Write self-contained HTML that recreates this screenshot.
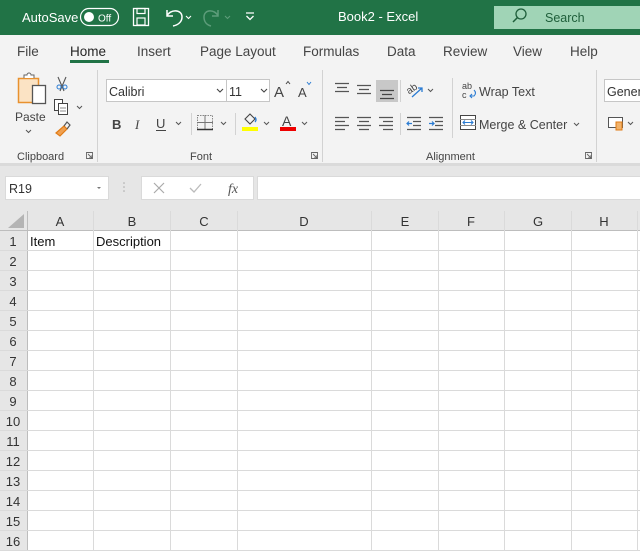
<!DOCTYPE html>
<html><head><meta charset="utf-8">
<style>
html,body{margin:0;padding:0;background:#fff;width:640px;height:551px;overflow:hidden}
svg{display:block;font-family:"Liberation Sans",sans-serif}
</style></head><body>
<svg width="640" height="551" viewBox="0 0 640 551" xmlns="http://www.w3.org/2000/svg">
<!-- title bar -->
<rect x="0" y="0" width="640" height="35" fill="#217346"/>
<text x="22" y="22" font-size="13" fill="#fff">AutoSave</text>
<rect x="80.5" y="8.5" width="38" height="17" rx="8.5" fill="none" stroke="#fff" stroke-width="1.2"/>
<circle cx="89" cy="17" r="5" fill="#fff"/>
<text x="98" y="21.5" font-size="10" fill="#fff">Off</text>
<!-- save icon -->
<rect x="133.5" y="8.5" width="15" height="17" fill="none" stroke="#fff" stroke-width="1.3"/>
<rect x="137" y="8.5" width="8" height="5" fill="none" stroke="#fff" stroke-width="1.2"/>
<rect x="137" y="18" width="8" height="7" fill="none" stroke="#fff" stroke-width="1.2"/>
<!-- undo -->
<path d="M167 10 v6 h6 M167 16 C170 9 182 9 182 17 C182 22 178 25 173 26" fill="none" stroke="#fff" stroke-width="1.5"/>
<path d="M186 16 l2.5 2.5 l2.5-2.5" fill="none" stroke="#fff" stroke-width="1.1"/>
<!-- redo (disabled) -->
<path d="M218 10 v6 h-6 M218 16 C215 9 204 9 204 17 C204 22 207 25 211 26" fill="none" stroke="#5d9c7a" stroke-width="1.5"/>
<path d="M225 16 l2.5 2.5 l2.5-2.5" fill="none" stroke="#5d9c7a" stroke-width="1.1"/>
<!-- customize -->
<path d="M246 13 h8 M246.5 16 l3.5 3.5 l3.5-3.5" fill="none" stroke="#fff" stroke-width="1.3"/>
<text x="338" y="21" font-size="13" fill="#fff">Book2  -  Excel</text>
<rect x="494" y="6" width="146" height="23" fill="#a0d4b6"/>
<circle cx="521" cy="14" r="5" fill="none" stroke="#1e5e3a" stroke-width="1.3"/>
<path d="M517.5 17.5 l-4.5 4.5" stroke="#1e5e3a" stroke-width="1.5"/>
<text x="545" y="22" font-size="12.5" fill="#1e5e3a">Search</text>

<!-- ribbon bg -->
<rect x="0" y="35" width="640" height="128" fill="#f3f3f3"/>
<g font-size="13.5" fill="#444">
<text x="17" y="56">File</text>
<text x="70" y="56" fill="#262626">Home</text>
<text x="137" y="56">Insert</text>
<text x="200" y="56">Page Layout</text>
<text x="303" y="56">Formulas</text>
<text x="387" y="56">Data</text>
<text x="443" y="56">Review</text>
<text x="513" y="56">View</text>
<text x="570" y="56">Help</text>
</g>
<rect x="70" y="60" width="39" height="3" fill="#217346"/>

<!-- group separators -->
<g stroke="#d2d2d2"><line x1="97.5" y1="70" x2="97.5" y2="162"/><line x1="322.5" y1="70" x2="322.5" y2="162"/><line x1="596.5" y1="70" x2="596.5" y2="162"/>
<line x1="191.5" y1="113" x2="191.5" y2="135"/><line x1="235.5" y1="113" x2="235.5" y2="135"/><line x1="400.5" y1="113" x2="400.5" y2="135"/><line x1="452.5" y1="78" x2="452.5" y2="138"/><line x1="400.5" y1="80" x2="400.5" y2="102"/></g>

<!-- clipboard -->
<rect x="18.5" y="78.5" width="20" height="24" fill="#fbe3c4" stroke="#e8912e" stroke-width="1.5"/>
<path d="M24 78 v-3 h3 a2 2 0 0 1 4 0 h3 v3" fill="#fff" stroke="#666" stroke-width="1"/>
<rect x="32.5" y="85.5" width="13" height="18" fill="#fff" stroke="#555" stroke-width="1.3"/>
<text x="15" y="121" font-size="12" fill="#444">Paste</text>
<path d="M26 130 l2.5 2.5 l2.5-2.5" fill="none" stroke="#555"/>
<!-- scissors -->
<path d="M58 77 l6 14 M66 77 l-6 14" stroke="#555" stroke-width="1.1"/>
<circle cx="59" cy="87" r="2" fill="none" stroke="#2b7cd3"/><circle cx="65" cy="87" r="2" fill="none" stroke="#2b7cd3"/>
<!-- copy -->
<rect x="54.5" y="99.5" width="8" height="11" fill="#fff" stroke="#444"/>
<rect x="58.5" y="103.5" width="9" height="11" fill="#fff" stroke="#444"/>
<path d="M60 108 h6 M60 111 h6" stroke="#666" stroke-width=".8"/>
<path d="M77 106 l2.5 2.5 l2.5-2.5" fill="none" stroke="#555"/>
<!-- format painter -->
<path d="M56 133 l8-7 l3 3 l-7 7 z" fill="#f0a050" stroke="#e07b15" stroke-width="1.2"/>
<path d="M64 126 l3-4 l3 3 l-3 4" fill="none" stroke="#555" stroke-width="1.2"/>
<text x="17" y="160" font-size="11" fill="#444">Clipboard</text>
<path d="M86.5 152.5 h6 v6 h-6 z M88 154 l4 4 M92 155 v3 h-3" fill="none" stroke="#666" stroke-width=".9"/>

<!-- font -->
<rect x="106.5" y="79.5" width="120" height="22" fill="#fff" stroke="#c6c6c6"/>
<text x="109" y="96" font-size="12.5" fill="#333">Calibri</text>
<path d="M217 89 l3 3 l3-3" fill="none" stroke="#444" stroke-width="1.1"/>
<rect x="226.5" y="79.5" width="43" height="22" fill="#fff" stroke="#c6c6c6"/>
<text x="229" y="96" font-size="12.5" fill="#333">11</text>
<path d="M261 89 l3 3 l3-3" fill="none" stroke="#444" stroke-width="1.1"/>
<text x="274" y="97" font-size="15" fill="#444">A</text>
<path d="M286 84 l2-2.5 l2 2.5" fill="none" stroke="#444"/>
<text x="298" y="97" font-size="13" fill="#444">A</text>
<path d="M307 82 l2 2.5 l2-2.5" fill="none" stroke="#2b7cd3"/>
<text x="112" y="129" font-size="13" font-weight="bold" fill="#444">B</text>
<text x="135" y="129" font-size="13" font-style="italic" fill="#444" font-family="Liberation Serif">I</text>
<text x="156" y="128" font-size="13" fill="#444">U</text>
<line x1="156" y1="130.5" x2="166" y2="130.5" stroke="#444"/>
<path d="M176 122 l2.5 2.5 l2.5-2.5" fill="none" stroke="#555"/>
<rect x="197.5" y="115.5" width="15" height="14" fill="none" stroke="#888" stroke-dasharray="1.5 1"/>
<path d="M205 115 v15 M197 122.5 h16" stroke="#777"/>
<line x1="197" y1="129.5" x2="213" y2="129.5" stroke="#333" stroke-width="1.5"/>
<path d="M221 122 l2.5 2.5 l2.5-2.5" fill="none" stroke="#555"/>
<path d="M245 119 l5-5 l5 5 l-5 5 z" fill="none" stroke="#444" stroke-width="1.1"/>
<path d="M255 117 q2 3 0 5" fill="none" stroke="#2b7cd3" stroke-width="1.3"/>
<rect x="242" y="127" width="16" height="4" fill="#ffff00"/>
<path d="M264 122 l2.5 2.5 l2.5-2.5" fill="none" stroke="#555"/>
<text x="282" y="126" font-size="14" fill="#444">A</text>
<rect x="280" y="127" width="16" height="4" fill="#e00"/>
<path d="M302 122 l2.5 2.5 l2.5-2.5" fill="none" stroke="#555"/>
<text x="190" y="160" font-size="11" fill="#444">Font</text>
<path d="M311.5 152.5 h6 v6 h-6 z M313 154 l4 4 M317 155 v3 h-3" fill="none" stroke="#666" stroke-width=".9"/>

<!-- alignment -->
<g stroke="#555" stroke-width="1.2">
<path d="M335 84.5 h14 M337 88.5 h10 M335 92.5 h14" transform="translate(0,-1)"/>
<path d="M357 85.5 h14 M359 89.5 h10 M357 93.5 h14"/>
</g>
<rect x="376" y="80" width="22" height="22" fill="#c8c8c8"/>
<g stroke="#444" stroke-width="1.2"><path d="M380 90.5 h14 M382 94.5 h10 M380 98.5 h14"/></g>
<text x="407" y="92" font-size="10" fill="#444" transform="rotate(-35 412 90)">ab</text>
<path d="M412 97 l10-9 M418 88 h4 v4" fill="none" stroke="#2b7cd3" stroke-width="1.3"/>
<path d="M428 89 l2.5 2.5 l2.5-2.5" fill="none" stroke="#555"/>
<g stroke="#555" stroke-width="1.2">
<path d="M335 117.5 h14 M335 121.5 h10 M335 125.5 h14 M335 129.5 h10"/>
<path d="M357 117.5 h14 M359 121.5 h10 M357 125.5 h14 M359 129.5 h10"/>
<path d="M379 117.5 h14 M383 121.5 h10 M379 125.5 h14 M383 129.5 h10"/>
<path d="M407 117.5 h14 M413 121.5 h8 M413 125.5 h8 M407 129.5 h14"/>
<path d="M429 117.5 h14 M435 121.5 h8 M435 125.5 h8 M429 129.5 h14"/>
</g>
<path d="M412 123.5 h-5 m2-2 l-2 2 l2 2" fill="none" stroke="#2b7cd3" stroke-width="1.2"/>
<path d="M429 123.5 h5 m-2-2 l2 2 l-2 2" fill="none" stroke="#2b7cd3" stroke-width="1.2"/>
<text x="462" y="89" font-size="9" fill="#444">ab</text>
<text x="462" y="98" font-size="9" fill="#444">c</text>
<path d="M474 90 q3 3 0 6 h-4 m2-2 l-2 2 l2 2" fill="none" stroke="#2b7cd3" stroke-width="1.1"/>
<text x="479" y="96" font-size="12.5" fill="#444">Wrap Text</text>
<rect x="460.5" y="115.5" width="15" height="14" fill="#fff" stroke="#444"/>
<path d="M460 119.5 h16 M460 125.5 h16" stroke="#888"/>
<path d="M463 122.5 h10 m-2-2 l2 2 l-2 2 m-6-4 l-2 2 l2 2" fill="none" stroke="#2b7cd3" stroke-width="1.1"/>
<text x="479" y="129" font-size="12.5" fill="#444">Merge &amp; Center</text>
<path d="M574 123 l2.5 2.5 l2.5-2.5" fill="none" stroke="#555"/>
<text x="426" y="160" font-size="11" fill="#444">Alignment</text>
<path d="M585.5 152.5 h6 v6 h-6 z M587 154 l4 4 M591 155 v3 h-3" fill="none" stroke="#666" stroke-width=".9"/>

<!-- number -->
<rect x="604.5" y="79.5" width="40" height="22" fill="#fff" stroke="#c6c6c6"/>
<text x="607" y="96" font-size="12.5" fill="#333">Gener</text>
<rect x="608.5" y="117.5" width="14" height="10" fill="#fff" stroke="#555"/>
<rect x="616" y="122" width="6" height="8" fill="#f2b36b" stroke="#e07b15"/>
<path d="M628 122 l2.5 2.5 l2.5-2.5" fill="none" stroke="#555"/>

<!-- gap band -->
<rect x="0" y="163" width="640" height="48" fill="#e6e6e6"/>
<rect x="0" y="163" width="640" height="3" fill="#dadada"/>
<rect x="5.5" y="176.5" width="103" height="23" fill="#fff" stroke="#dadada"/>
<text x="9" y="193" font-size="12.5" fill="#333">R19</text>
<path d="M97 187 l2 2 l2-2 z" fill="#777"/>
<g fill="#aaa"><circle cx="124" cy="183" r=".8"/><circle cx="124" cy="187" r=".8"/><circle cx="124" cy="191" r=".8"/></g>
<rect x="141.5" y="176.5" width="112" height="23" fill="#fff" stroke="#dadada"/>
<path d="M154 183 l10 10 M164 183 l-10 10" stroke="#aaa" stroke-width="1.2"/>
<path d="M190 188 l4 4 l7-8" fill="none" stroke="#bbb" stroke-width="1.3"/>
<text x="228" y="193" font-size="14" font-style="italic" fill="#555" font-family="Liberation Serif">fx</text>
<rect x="257.5" y="176.5" width="390" height="23" fill="#fff" stroke="#dadada"/>

<!-- header -->
<rect x="0" y="211" width="640" height="19" fill="#e6e6e6"/>
<rect x="0" y="230" width="27" height="321" fill="#e6e6e6"/>
<path d="M8 228 L24 214 L24 228 z" fill="#b4b4b4"/>
<g stroke="#d4d4d4">
<line x1="27.5" y1="211" x2="27.5" y2="551" stroke="#bdbdbd"/>
<line x1="0" y1="230.5" x2="640" y2="230.5" stroke="#bdbdbd"/>
</g>
<g stroke="#dadada">
<line x1="93.5" y1="211" x2="93.5" y2="551"/>
<line x1="170.5" y1="211" x2="170.5" y2="551"/>
<line x1="237.5" y1="211" x2="237.5" y2="551"/>
<line x1="371.5" y1="211" x2="371.5" y2="551"/>
<line x1="438.5" y1="211" x2="438.5" y2="551"/>
<line x1="504.5" y1="211" x2="504.5" y2="551"/>
<line x1="571.5" y1="211" x2="571.5" y2="551"/>
<line x1="637.5" y1="211" x2="637.5" y2="551"/>
<line x1="0" y1="250.5" x2="640" y2="250.5"/><line x1="0" y1="270.5" x2="640" y2="270.5"/>
<line x1="0" y1="290.5" x2="640" y2="290.5"/><line x1="0" y1="310.5" x2="640" y2="310.5"/>
<line x1="0" y1="330.5" x2="640" y2="330.5"/><line x1="0" y1="350.5" x2="640" y2="350.5"/>
<line x1="0" y1="370.5" x2="640" y2="370.5"/><line x1="0" y1="390.5" x2="640" y2="390.5"/>
<line x1="0" y1="410.5" x2="640" y2="410.5"/><line x1="0" y1="430.5" x2="640" y2="430.5"/>
<line x1="0" y1="450.5" x2="640" y2="450.5"/><line x1="0" y1="470.5" x2="640" y2="470.5"/>
<line x1="0" y1="490.5" x2="640" y2="490.5"/><line x1="0" y1="510.5" x2="640" y2="510.5"/>
<line x1="0" y1="530.5" x2="640" y2="530.5"/><line x1="0" y1="550.5" x2="640" y2="550.5"/>
</g>
<g font-size="13" fill="#333" text-anchor="middle">
<text x="60" y="226">A</text><text x="132" y="226">B</text><text x="204" y="226">C</text>
<text x="304" y="226">D</text><text x="405" y="226">E</text><text x="471" y="226">F</text>
<text x="538" y="226">G</text><text x="604" y="226">H</text>
</g>
<g font-size="13" fill="#333" text-anchor="middle">
<text x="13" y="246">1</text><text x="13" y="266">2</text><text x="13" y="286">3</text><text x="13" y="306">4</text>
<text x="13" y="326">5</text><text x="13" y="346">6</text><text x="13" y="366">7</text><text x="13" y="386">8</text>
<text x="13" y="406">9</text><text x="13" y="426">10</text><text x="13" y="446">11</text><text x="13" y="466">12</text>
<text x="13" y="486">13</text><text x="13" y="506">14</text><text x="13" y="526">15</text><text x="13" y="546">16</text>
</g>
<text x="30" y="246" font-size="13" fill="#111">Item</text>
<text x="96" y="246" font-size="13" fill="#111">Description</text>
</svg>
</body></html>
